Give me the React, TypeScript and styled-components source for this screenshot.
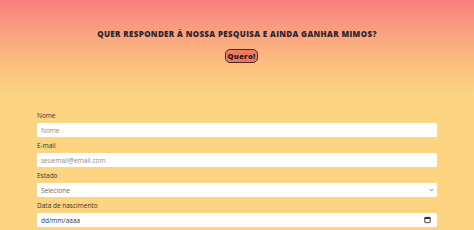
import React from "react";
import styled, { createGlobalStyle } from "styled-components";

const Global = createGlobalStyle`
  html, body { margin: 0; padding: 0; }
  body {
    font-family: "Open Sans", "Liberation Sans", sans-serif;
    background: #fcd482;
  }
`;

const Page = styled.div`
  width: 474px;
  min-height: 230px;
  background: linear-gradient(180deg, #f8807f 0px, #fbb87f 55px, #fcd482 95px, #fcd482 100%);
`;

const Hero = styled.section`
  display: flex;
  flex-direction: column;
  align-items: center;
  padding-top: 28px;
  height: 80px;
  box-sizing: border-box;
`;

const Title = styled.h2`
  margin: 0;
  font-family: "Open Sans", "Liberation Sans", sans-serif;
  font-weight: 800;
  font-size: 8px;
  letter-spacing: 0.35px;
  color: #2b2530;
  text-transform: uppercase;
`;

const CtaButton = styled.button`
  margin: 10px 0 0 9px;
  font-family: "Open Sans", "Liberation Sans", sans-serif;
  font-weight: 800;
  font-size: 7.5px;
  letter-spacing: 0.3px;
  color: #2b1a1a;
  background: #ef7b5e;
  border: 1px solid #4a2a22;
  border-radius: 5px;
  padding: 1px 2px;
  line-height: 10px;
`;

const Form = styled.form`
  width: 400px;
  margin: 31px auto 0;
  display: flex;
  flex-direction: column;
  gap: 4px;
`;

const Field = styled.div`
  display: flex;
  flex-direction: column;
  gap: 3px;
`;

const Label = styled.label`
  font-size: 6.5px;
  color: #3a3226;
  line-height: 9px;
`;

const InputWrap = styled.div`
  position: relative;
  width: 400px;
  height: 14px;
`;

const Input = styled.input`
  box-sizing: border-box;
  width: 400px;
  height: 14px;
  border: none;
  border-radius: 1px;
  background: #fff;
  padding: 0 4px;
  font-family: "Open Sans", "Liberation Sans", sans-serif;
  font-size: 6.5px;
  color: #555;
  outline: none;
  display: block;
  &::placeholder { color: #8a8a8a; }
`;

const DateText = styled(Input)`
  &::placeholder { color: #333; }
`;

const Select = styled.select`
  box-sizing: border-box;
  width: 400px;
  height: 14px;
  border: none;
  border-radius: 1px;
  background: #fff;
  padding: 0 4px;
  font-family: "Open Sans", "Liberation Sans", sans-serif;
  font-size: 6.5px;
  color: #666;
  appearance: none;
  -webkit-appearance: none;
  outline: none;
  display: block;
`;

const TrailingIcon = styled.svg`
  position: absolute;
  top: 50%;
  transform: translateY(-50%);
  pointer-events: none;
`;

export default function App() {
  return (
    <>
      <Global />
      <Page>
        <Hero>
          <Title>Quer responder à nossa pesquisa e ainda ganhar mimos?</Title>
          <CtaButton type="button">Quero!</CtaButton>
        </Hero>
        <Form>
          <Field>
            <Label>Nome</Label>
            <Input placeholder="Nome" />
          </Field>
          <Field>
            <Label>E-mail</Label>
            <Input placeholder="seuemail@email.com" />
          </Field>
          <Field>
            <Label>Estado</Label>
            <InputWrap>
              <Select defaultValue="">
                <option value="">Selecione</option>
              </Select>
              <TrailingIcon width="5" height="4" viewBox="0 0 5 4" style={{ right: 3 }}>
                <path d="M0.8 1.2 L2.5 2.9 L4.2 1.2" fill="none" stroke="#555" strokeWidth="0.8" />
              </TrailingIcon>
            </InputWrap>
          </Field>
          <Field>
            <Label>Data de nascimento</Label>
            <InputWrap>
              <DateText placeholder="dd/mm/aaaa" />
              <TrailingIcon width="7" height="7" viewBox="0 0 7 7" style={{ right: 6 }}>
                <rect x="0.8" y="0.8" width="5.4" height="5.4" rx="0.6" fill="none" stroke="#222" strokeWidth="0.9" />
                <rect x="0.8" y="0.8" width="5.4" height="1.6" fill="#222" />
              </TrailingIcon>
            </InputWrap>
          </Field>
        </Form>
      </Page>
    </>
  );
}
